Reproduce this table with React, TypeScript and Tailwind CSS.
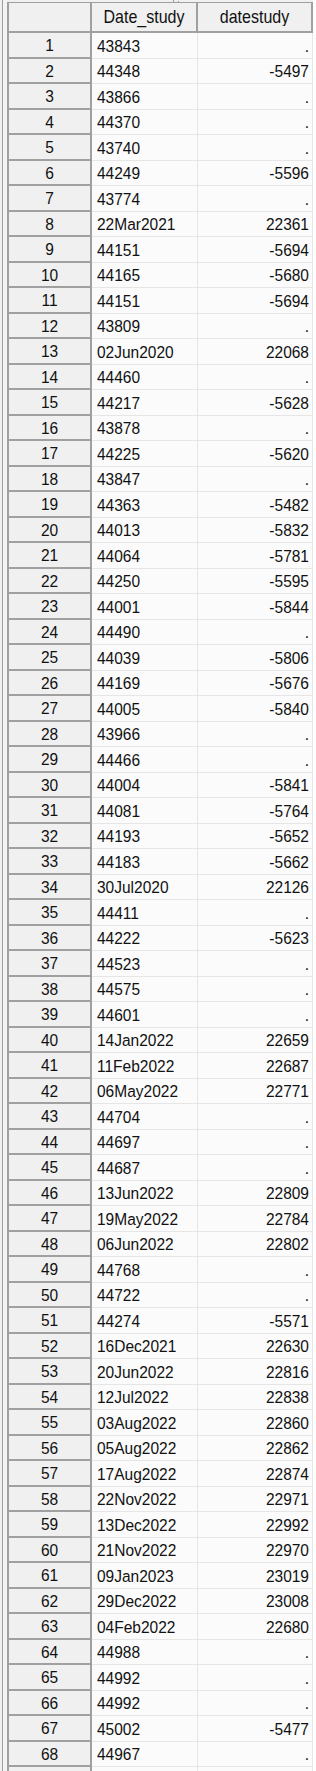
import React from 'react';

type Row = [string, string];

const rows: Row[] = [
    ['43843', '.'], ['44348', '-5497'], ['43866', '.'], ['44370', '.'], ['43740', '.'],
    ['44249', '-5596'], ['43774', '.'], ['22Mar2021', '22361'], ['44151', '-5694'], ['44165', '-5680'],
    ['44151', '-5694'], ['43809', '.'], ['02Jun2020', '22068'], ['44460', '.'], ['44217', '-5628'],
    ['43878', '.'], ['44225', '-5620'], ['43847', '.'], ['44363', '-5482'], ['44013', '-5832'],
    ['44064', '-5781'], ['44250', '-5595'], ['44001', '-5844'], ['44490', '.'], ['44039', '-5806'],
    ['44169', '-5676'], ['44005', '-5840'], ['43966', '.'], ['44466', '.'], ['44004', '-5841'],
    ['44081', '-5764'], ['44193', '-5652'], ['44183', '-5662'], ['30Jul2020', '22126'], ['44411', '.'],
    ['44222', '-5623'], ['44523', '.'], ['44575', '.'], ['44601', '.'], ['14Jan2022', '22659'],
    ['11Feb2022', '22687'], ['06May2022', '22771'], ['44704', '.'], ['44697', '.'], ['44687', '.'],
    ['13Jun2022', '22809'], ['19May2022', '22784'], ['06Jun2022', '22802'], ['44768', '.'], ['44722', '.'],
    ['44274', '-5571'], ['16Dec2021', '22630'], ['20Jun2022', '22816'], ['12Jul2022', '22838'], ['03Aug2022', '22860'],
    ['05Aug2022', '22862'], ['17Aug2022', '22874'], ['22Nov2022', '22971'], ['13Dec2022', '22992'], ['21Nov2022', '22970'],
    ['09Jan2023', '23019'], ['29Dec2022', '23008'], ['04Feb2022', '22680'], ['44988', '.'], ['44992', '.'],
    ['44992', '.'], ['45002', '-5477'], ['44967', '.'],
];

// the grid text is a touch taller than it is wide, so stretch it a little
const T = ({ children }: { children?: React.ReactNode }) => (
    <span className="inline-block scale-y-[1.12]">{children}</span>
);

const DataRow = ({ n, date, value }: { n?: number; date?: string; value?: string }) => (
    <div className="flex h-[25.5px] shrink-0">
        <div className="w-[83px] flex items-center justify-center bg-[#f0f0f0] border-r-2 border-b-2 border-[#a0a0a0]">
            <T>{n}</T>
        </div>
        <div className="w-[106px] flex items-center pl-[5px] bg-[#fbfbfb] border-r border-b border-[#e6e6e6]">
            <T>{date}</T>
        </div>
        <div className="w-[115px] flex items-center justify-end pr-[3px] bg-[#fbfbfb] border-r border-b border-[#e6e6e6]">
            <T>{value}</T>
        </div>
    </div>
);

const App: React.FC = () => {
    return (
        <div className="w-[316px] h-[1771px] overflow-hidden bg-[#f0f0f0] flex text-[15.5px] text-[#111] leading-none font-['Liberation_Sans',Arial,sans-serif]">
            {/* outer splitter edge */}
            <div className="w-[2px] shrink-0" />
            <div className="w-[1px] shrink-0 bg-[#a0a0a0]" />
            <div className="w-[4px] shrink-0 bg-[#f4f4f4]" />

            <div className="flex flex-col pt-[2px] relative">
                {/* grip marks on top edge */}
                <div className="absolute top-0 left-[166px] flex gap-[4px]">
                    <div className="w-[1px] h-[2px] bg-[#9a9a9a]" />
                    <div className="w-[1px] h-[1px] mt-[1px] bg-[#9a9a9a]" />
                </div>

                <div className="flex flex-col border-l-2 border-[#a0a0a0]">
                    {/* header */}
                    <div className="flex h-[31px] shrink-0 border-t border-[#a0a0a0] text-[16px]">
                        <div className="w-[83px] bg-[#f0f0f0] border-r-2 border-b-2 border-[#a0a0a0]" />
                        <div className="w-[106px] flex items-center justify-center bg-[#f0f0f0] border-r-2 border-b-2 border-[#a0a0a0]">
                            <T>Date_study</T>
                        </div>
                        <div className="w-[115px] flex items-center justify-center bg-[#f0f0f0] border-r-2 border-b-2 border-[#a0a0a0]">
                            <T>datestudy</T>
                        </div>
                    </div>

                    {rows.map(([d, v], i) => (
                        <DataRow key={i} n={i + 1} date={d} value={v} />
                    ))}
                    <DataRow />
                </div>
            </div>

            <div className="flex-1 bg-[#fdfdfd]" />
        </div>
    );
};

export default App;
